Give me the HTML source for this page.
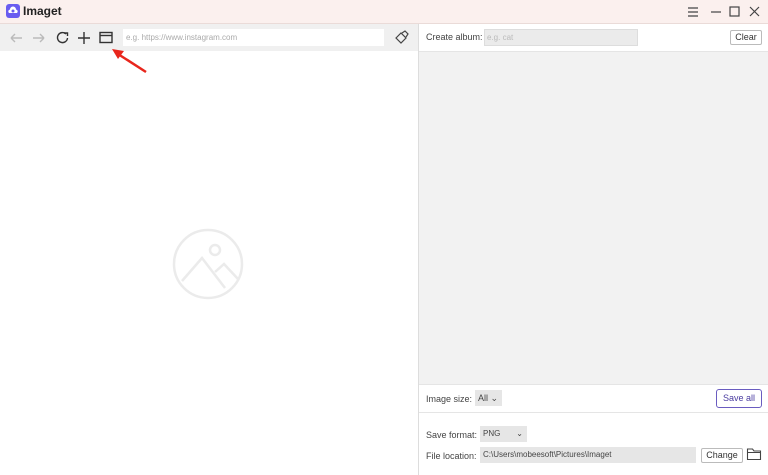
<!DOCTYPE html><html><head><style>
body{margin:0;width:768px;height:475px;position:relative;font-family:"Liberation Sans",sans-serif;background:#fff;overflow:hidden}
.a{position:absolute}
.t{font-size:9px;color:#444}
</style></head><body>
<div class="a" style="left:0;top:0;width:768px;height:23px;background:#fbf0ee;border-bottom:1px solid #eadbd8"></div>
<div class="a" style="left:6px;top:4px;width:14px;height:14px;border-radius:3px;background:#6a5cf0"></div>
<svg class="a" style="left:6px;top:4px" width="14" height="14"><path d="M3 9a2 2 0 0 1 1-3.5a3 3 0 0 1 6 0a2 2 0 0 1 1 3.5z" fill="#fff"/><circle cx="7" cy="7" r="1.5" fill="#6a5cf0"/></svg>
<div class="a" style="left:23px;top:4px;font-size:12px;font-weight:bold;color:#222">Imaget</div>
<svg class="a" style="left:684px;top:5px" width="80" height="14" stroke="#444" stroke-width="1.2" fill="none"><path d="M4 3h10M4 7h10M4 11h10"/><path d="M27 7h10"/><rect x="46" y="2" width="9" height="9"/><path d="M66 2l9 9M75 2l-9 9"/></svg>
<div class="a" style="left:0;top:24px;width:418px;height:27px;background:#f0f0f0"></div>
<svg class="a" style="left:6px;top:29px" width="110" height="18" fill="none" stroke-width="1.4">
<path d="M5 9h11M5 9l4-4M5 9l4 4" stroke="#bbb"/><path d="M27 9h11M38 9l-4-4M38 9l-4 4" stroke="#bbb"/>
<path d="M60 5a5 5 0 1 0 1.5 4" stroke="#333"/><path d="M58 4h3.5v3" stroke="#333"/>
<path d="M78 3v12M72 9h12" stroke="#333"/>
<rect x="94" y="3.5" width="12" height="10" stroke="#333"/><path d="M94 6.5h12" stroke="#333"/></svg>
<div class="a" style="left:123px;top:29px;width:261px;height:17px;background:#fff;font-size:8px;color:#aaa;line-height:17px;text-indent:3px">e.g. https://www.instagram.com</div>
<svg class="a" style="left:393px;top:30px" width="16" height="16" fill="none" stroke="#444" stroke-width="1.2"><path d="M3 8l5-5 5 5-5 5z"/><path d="M9 3l3-2 3 3-2 3"/></svg>
<svg class="a" style="left:100px;top:40px" width="50" height="35"><path d="M46 32L18 14" stroke="#e8261c" stroke-width="2.5"/><path d="M12 9l12 2-6 8z" fill="#e8261c"/></svg>
<svg class="a" style="left:170px;top:226px" width="78" height="78" fill="none" stroke="#ebebeb" stroke-width="2.5"><circle cx="38" cy="38" r="34"/><circle cx="45" cy="24" r="5"/><path d="M12 55L32 32L55 62M45 46l9-8l14 15"/></svg>
<div class="a" style="left:418px;top:24px;width:1px;height:451px;background:#ddd"></div>
<div class="a" style="left:419px;top:51px;width:349px;height:332px;background:#f2f2f2;border-top:1px solid #e5e5e5;border-bottom:1px solid #e5e5e5"></div>
<div class="a t" style="left:426px;top:32px">Create album:</div>
<div class="a" style="left:484px;top:29px;width:152px;height:15px;background:#ebebeb;border:1px solid #ddd;font-size:8px;color:#bbb;line-height:15px;text-indent:2px">e.g. cat</div>
<div class="a t" style="left:730px;top:30px;width:30px;height:13px;border:1px solid #bbb;border-radius:2px;text-align:center;line-height:13px;color:#333">Clear</div>
<div class="a t" style="left:426px;top:394px">Image size:</div>
<div class="a t" style="left:475px;top:390px;width:27px;height:16px;background:#e6e6e6;line-height:16px;text-indent:3px">All ⌄</div>
<div class="a" style="left:716px;top:389px;width:44px;height:17px;border:1px solid #6a5cc0;border-radius:3px;font-size:9px;color:#4a3ca0;text-align:center;line-height:17px">Save all</div>
<div class="a" style="left:419px;top:412px;width:349px;height:1px;background:#e5e5e5"></div>
<div class="a t" style="left:426px;top:430px">Save format:</div>
<div class="a t" style="left:480px;top:426px;width:47px;height:16px;background:#e6e6e6;line-height:16px;text-indent:3px;font-size:8px">PNG<span style="position:absolute;right:4px">⌄</span></div>
<div class="a t" style="left:426px;top:451px">File location:</div>
<div class="a" style="left:480px;top:447px;width:216px;height:16px;background:#e6e6e6;font-size:8px;color:#444;line-height:16px;text-indent:3px">C:\Users\mobeesoft\Pictures\Imaget</div>
<div class="a t" style="left:701px;top:448px;width:40px;height:13px;border:1px solid #bbb;border-radius:2px;text-align:center;line-height:13px;color:#333">Change</div>
<svg class="a" style="left:746px;top:447px" width="16" height="14" fill="none" stroke="#444" stroke-width="1.1"><path d="M1.5 2h5l1.5 2h6.5v8.5h-13z M1.5 5.5h13"/></svg>
</body></html>
